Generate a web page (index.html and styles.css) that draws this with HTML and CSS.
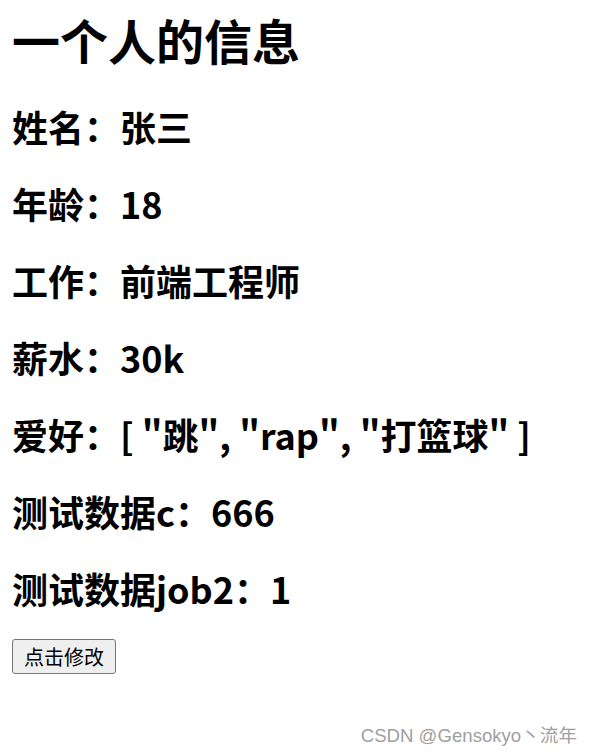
FILE: index.html
```html
<!DOCTYPE html>
<html lang="zh-CN">
<head>
<meta charset="utf-8">
<title>一个人的信息</title>
<link rel="stylesheet" href="styles.css">
</head>
<body>
<div class="app">
  <h1 class="title">一个人的信息</h1>
  <h2 class="row">姓名：张三</h2>
  <h2 class="row">年龄：18</h2>
  <h2 class="row">工作：前端工程师</h2>
  <h2 class="row">薪水：30k</h2>
  <h2 class="row">爱好：[ "跳", "rap", "打篮球" ]</h2>
  <h2 class="row">测试数据c：666</h2>
  <h2 class="row row-last">测试数据job2：1</h2>
  <button class="btn" type="button">点击修改</button>
</div>
<div class="watermark">CSDN @Gensokyo丶流年</div>
</body>
</html>
```

FILE: styles.css
```css
html, body {
  margin: 0;
  padding: 0;
  background: #ffffff;
}
body {
  position: relative;
  width: 592px;
  height: 754px;
  overflow: hidden;
  font-family: "Noto Sans CJK SC", "Noto Sans", sans-serif;
  color: #000;
}
.app {
  padding: 8px 12px 0 12px;
}
.title {
  margin: 0 0 32px 0;
  font-size: 48px;
  line-height: 63px;
  font-weight: 700;
}
.row {
  margin: 30px 0;
  font-size: 36px;
  line-height: 47px;
  font-weight: 700;
}
.title + .row {
  margin-top: 32px;
}
.row-last {
  margin-bottom: 27px;
}
.btn {
  display: block;
  margin: 0;
  height: 35px;
  width: 104px;
  padding: 0;
  font-family: "Noto Sans CJK SC", sans-serif;
  font-size: 20px;
  line-height: 30px;
  color: #000;
  background: #efefef;
  border: 1px solid #767676;
  border-radius: 3px;
}
.watermark {
  position: absolute;
  right: 15px;
  bottom: 7px;
  font-family: "Liberation Sans", "Noto Sans CJK SC", sans-serif;
  font-size: 18.6px;
  line-height: 22px;
  color: #a0a0a0;
  text-shadow: 0 0 1px #ffffff;
}
```
